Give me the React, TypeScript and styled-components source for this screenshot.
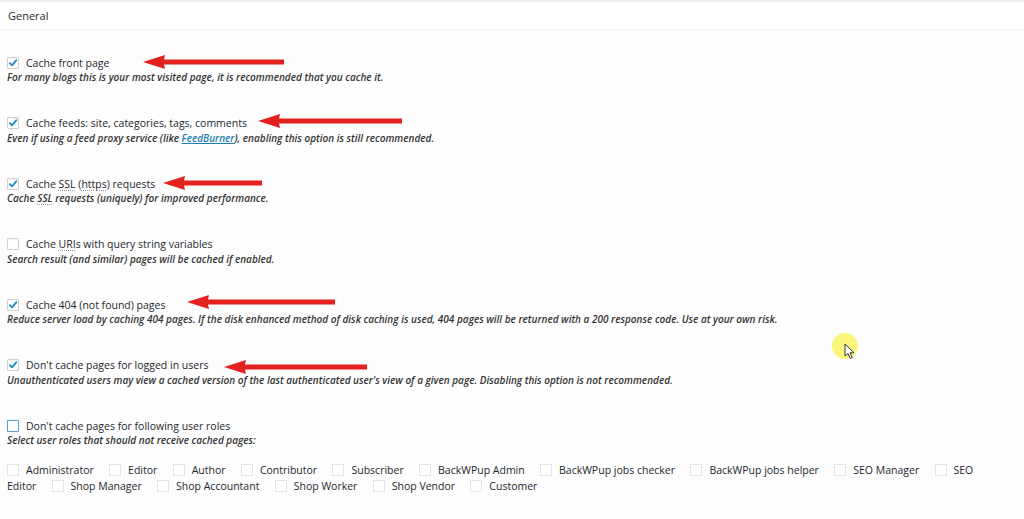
import React from "react";
import styled, { createGlobalStyle } from "styled-components";

const GlobalStyle = createGlobalStyle`
  html, body {
    margin: 0;
    background: #ffffff;
  }
  body {
    font-family: "Open Sans", "Noto Sans", "Liberation Sans", sans-serif;
    color: #23282d;
  }
`;

type Opt = {
  label: React.ReactNode;
  desc: React.ReactNode;
  checked: boolean;
  active?: boolean;
  arrow?: { left: number; width: number; top: number };
};

const options: Opt[] = [
  {
    label: "Cache front page",
    desc: "For many blogs this is your most visited page, it is recommended that you cache it.",
    checked: true,
    arrow: { left: 136, width: 141, top: -1 },
  },
  {
    label: "Cache feeds: site, categories, tags, comments",
    desc: (
      <>
        Even if using a feed proxy service (like <a href="#">FeedBurner</a>), enabling this option is still recommended.
      </>
    ),
    checked: true,
    arrow: { left: 251, width: 144, top: -3 },
  },
  {
    label: (
      <>
        Cache <abbr>SSL</abbr> (<abbr>https</abbr>) requests
      </>
    ),
    desc: (
      <>
        Cache <abbr>SSL</abbr> requests (uniquely) for improved performance.
      </>
    ),
    checked: true,
    arrow: { left: 156, width: 99, top: -1 },
  },
  {
    label: (
      <>
        Cache <abbr>URI</abbr>s with query string variables
      </>
    ),
    desc: "Search result (and similar) pages will be cached if enabled.",
    checked: false,
  },
  {
    label: "Cache 404 (not found) pages",
    desc: "Reduce server load by caching 404 pages. If the disk enhanced method of disk caching is used, 404 pages will be returned with a 200 response code. Use at your own risk.",
    checked: true,
    arrow: { left: 180, width: 148, top: -3 },
  },
  {
    label: "Don't cache pages for logged in users",
    desc: "Unauthenticated users may view a cached version of the last authenticated user's view of a given page. Disabling this option is not recommended.",
    checked: true,
    arrow: { left: 217, width: 143, top: 1 },
  },
  {
    label: "Don't cache pages for following user roles",
    desc: "Select user roles that should not receive cached pages:",
    checked: false,
    active: true,
  },
];

const roles = [
  "Administrator",
  "Editor",
  "Author",
  "Contributor",
  "Subscriber",
  "BackWPup Admin",
  "BackWPup jobs checker",
  "BackWPup jobs helper",
  "SEO Manager",
  "SEO Editor",
  "Shop Manager",
  "Shop Accountant",
  "Shop Worker",
  "Shop Vendor",
  "Customer",
];

export default function App() {
  return (
    <Page>
      <GlobalStyle />
      <Header>General</Header>
      <Options>
        {options.map((o, i) => (
          <Option key={i}>
            <LabelRow>
              <Box $active={o.active}>{o.checked && <Tick />}</Box>
              <Label>{o.label}</Label>
            </LabelRow>
            <Desc>{o.desc}</Desc>
            {o.arrow && <Arrow left={o.arrow.left} width={o.arrow.width} top={o.arrow.top} />}
          </Option>
        ))}
        <Roles>
          {roles.map((r) => (
            <React.Fragment key={r}>
              <SmallBox />
              {r.split(" ").map((w, j, all) => (
                <React.Fragment key={j}>
                  {j > 0 && " "}
                  <Word $last={j === all.length - 1}>{w}</Word>
                </React.Fragment>
              ))}{" "}
            </React.Fragment>
          ))}
        </Roles>
      </Options>
      <Cursor />
    </Page>
  );
}

const Tick = () => (
  <svg width="10" height="10" viewBox="0 0 10 10">
    <path d="M1.8 5.2 L4 7.4 L8.4 2.2" fill="none" stroke="#1e8cbe" strokeWidth="1.8" strokeLinecap="round" strokeLinejoin="round" />
  </svg>
);

const Arrow = ({ left, width, top }: { left: number; width: number; top: number }) => (
  <ArrowSvg style={{ left, top }} width={width} height="16" viewBox={`0 0 ${width} 16`}>
    <polygon points={`0,8 22,1 21,5.6 ${width},5.4 ${width},10.4 21,10.4 22,15`} fill="#e3211f" />
  </ArrowSvg>
);

const Cursor = () => (
  <CursorWrap>
    <svg width="12" height="17" viewBox="0 0 12 17">
      <path d="M1 1 L1 13 L4 10.5 L6.2 15.5 L8.2 14.6 L6 9.8 L10 9.8 Z" fill="#fff" stroke="#333" strokeWidth="1" strokeLinejoin="round" />
    </svg>
  </CursorWrap>
);

const Page = styled.div`
  position: relative;
  width: 1024px;
  height: 519px;
  overflow: hidden;
  background: #fdfdfd;
`;

const Header = styled.div`
  height: 30px;
  box-sizing: border-box;
  padding: 6px 8px 0;
  border-top: 2px solid #ececec;
  border-bottom: 1px solid #efefef;
  background: #fff;
  font-size: 11px;
  color: #23282d;
`;

const Options = styled.div`
  padding: 25px 7px 0;
`;

const Option = styled.div`
  position: relative;
  height: 60.5px;
`;

const LabelRow = styled.div`
  display: flex;
  align-items: center;
  height: 15px;
`;

const Box = styled.span<{ $active?: boolean }>`
  display: inline-flex;
  align-items: center;
  justify-content: center;
  width: 12px;
  height: 12px;
  box-sizing: border-box;
  border: 1px solid ${(p) => (p.$active ? "#5b9dd9" : "#d0d0d0")};
  border-radius: 1px;
  background: #fff;
  margin-right: 7px;
  box-shadow: ${(p) => (p.$active ? "0 0 1px #7fb2e5" : "inset 0 1px 1px rgba(0,0,0,0.04)")};
`;

const Label = styled.span`
  font-size: 10.5px;
  color: #23282d;

  abbr {
    text-decoration: underline dotted #999;
    text-underline-offset: 2px;
  }
`;

const Desc = styled.div`
  margin-top: 0;
  font-size: 10px;
  line-height: 14px;
  font-style: italic;
  font-weight: 600;
  color: #333;

  a {
    color: #1e7cb4;
    text-decoration: underline;
  }
  abbr {
    text-decoration: underline dotted #999;
    text-underline-offset: 2px;
  }
`;

const ArrowSvg = styled.svg`
  position: absolute;
`;

const Roles = styled.div`
  margin-top: -17px;
  width: 990px;
  font-size: 10.5px;
  line-height: 16px;
  color: #23282d;
`;

const Word = styled.span<{ $last?: boolean }>`
  margin-right: ${(p) => (p.$last ? "12.6px" : "0")};
`;

const SmallBox = styled.span`
  display: inline-block;
  vertical-align: -2px;
  width: 12px;
  height: 12px;
  box-sizing: border-box;
  border: 1px solid #e4e4e4;
  margin-right: 7px;
  background: #fff;
`;

const CursorWrap = styled.div`
  position: absolute;
  left: 832px;
  top: 333px;
  width: 26px;
  height: 26px;
  border-radius: 50%;
  background: #fbf57a;

  svg {
    position: absolute;
    left: 12px;
    top: 10px;
  }
`;
